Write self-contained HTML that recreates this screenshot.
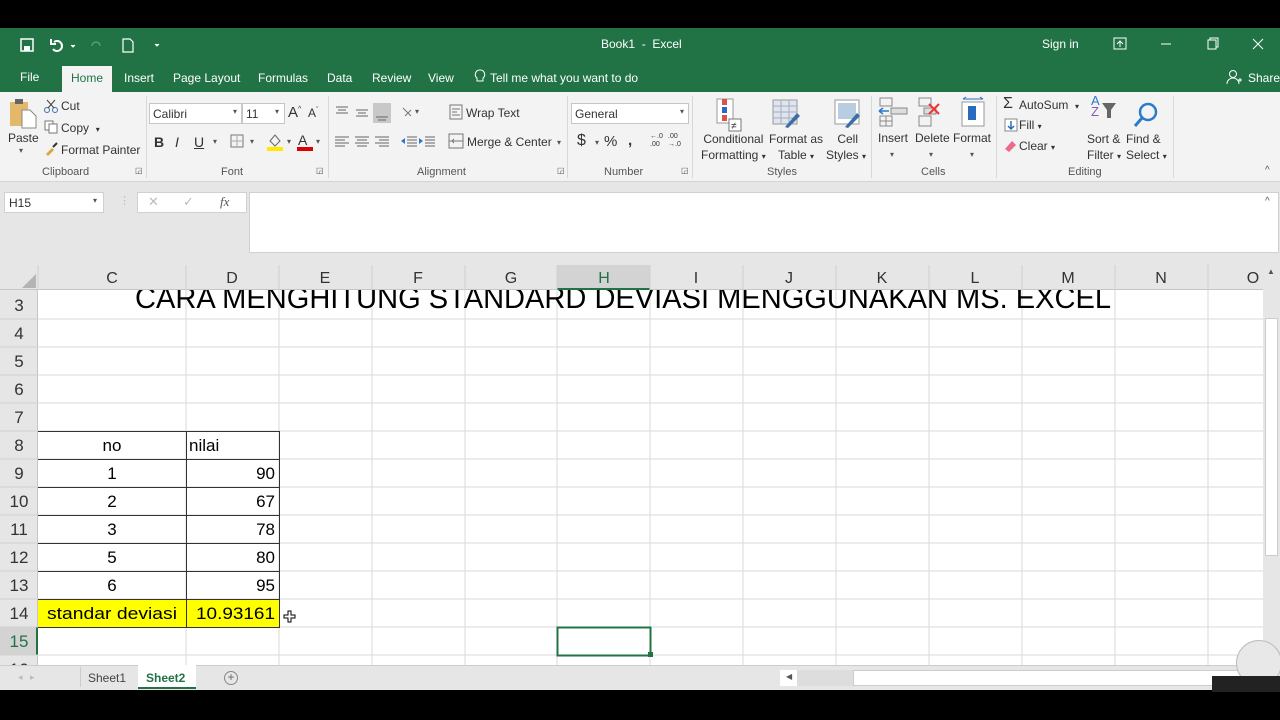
<!DOCTYPE html>
<html><head><meta charset="utf-8"><style>
*{margin:0;padding:0;box-sizing:border-box}
body{width:1280px;height:720px;overflow:hidden;background:#000;font-family:"Liberation Sans",sans-serif;position:relative}
.a{position:absolute;white-space:nowrap}
.w{color:#fff;font-size:12px}
.r{font-size:12px;color:#333}
.g{font-size:11px;color:#555}
.ic{position:absolute}
</style></head><body>
<!-- title bar -->
<div class="a" style="left:0;top:28px;width:1280px;height:64px;background:#217346"></div>
<svg class="ic" style="left:20px;top:37px" width="150" height="16" viewBox="0 0 150 16">
<rect x="1" y="2" width="12" height="12" fill="none" stroke="#fff" stroke-width="1.5"/><rect x="4" y="9" width="6" height="5" fill="#fff"/>
<path d="M34 5 a5 5 0 1 1 -1 7" fill="none" stroke="#fff" stroke-width="2"/><path d="M31 2 v5 h5" fill="none" stroke="#fff" stroke-width="2"/>
<path d="M51 8 l2 2 l2 -2" fill="#fff" stroke="#fff"/>
<path d="M72 9 a4 4 0 0 1 8 0" fill="none" stroke="#5a9a74" stroke-width="1.5"/>
<path d="M103 2 h7 l3 3 v10 h-10 z" fill="none" stroke="#fff" stroke-width="1.2"/>
<path d="M135 7 l2 2 l2 -2" fill="#fff" stroke="#fff"/>
</svg>
<div class="a w" style="left:601px;top:37px">Book1 &nbsp;-&nbsp; Excel</div>
<div class="a w" style="left:1042px;top:37px">Sign in</div>
<svg class="ic" style="left:1112px;top:37px" width="160" height="14"><rect x="2" y="1" width="12" height="11" fill="none" stroke="#fff"/><path d="M8 10V4M5 7l3-3 3 3" stroke="#fff" fill="none"/><path d="M49 7h10" stroke="#fff"/><rect x="96" y="3" width="8" height="9" fill="none" stroke="#fff"/><path d="M98 3V1h8v9h-2" stroke="#fff" fill="none"/><path d="M141 2l10 10M151 2l-10 10" stroke="#fff"/></svg>
<!-- tabs -->
<div class="a" style="left:62px;top:66px;width:50px;height:27px;background:#f3f3f3"></div>
<div class="a w" style="left:20px;top:70px">File</div>
<div class="a" style="left:71px;top:71px;font-size:12px;color:#217346">Home</div>
<div class="a w" style="left:124px;top:71px">Insert</div>
<div class="a w" style="left:173px;top:71px">Page Layout</div>
<div class="a w" style="left:258px;top:71px">Formulas</div>
<div class="a w" style="left:327px;top:71px">Data</div>
<div class="a w" style="left:372px;top:71px">Review</div>
<div class="a w" style="left:428px;top:71px">View</div>
<svg class="ic" style="left:474px;top:69px" width="12" height="16"><path d="M6 1a4.5 4.5 0 0 0-3 8v3h6v-3a4.5 4.5 0 0 0-3-8z" fill="none" stroke="#fff"/></svg>
<div class="a w" style="left:490px;top:71px">Tell me what you want to do</div>
<svg class="ic" style="left:1226px;top:69px" width="16" height="16"><circle cx="7" cy="5" r="3.5" fill="none" stroke="#fff"/><path d="M1 15a6 6 0 0 1 12 0M12 11h4M14 9v4" fill="none" stroke="#fff"/></svg>
<div class="a w" style="left:1248px;top:71px">Share</div>
<!-- ribbon -->
<div class="a" style="left:0;top:92px;width:1280px;height:90px;background:#f3f3f3;border-bottom:1px solid #d5d5d5"></div>
<div class="a" style="left:0;top:182px;width:1280px;height:83px;background:#e6e6e6"></div>
<div class="a" style="left:146px;top:96px;width:1px;height:82px;background:#d8d8d8"></div>
<div class="a" style="left:328px;top:96px;width:1px;height:82px;background:#d8d8d8"></div>
<div class="a" style="left:567px;top:96px;width:1px;height:82px;background:#d8d8d8"></div>
<div class="a" style="left:692px;top:96px;width:1px;height:82px;background:#d8d8d8"></div>
<div class="a" style="left:871px;top:96px;width:1px;height:82px;background:#d8d8d8"></div>
<div class="a" style="left:996px;top:96px;width:1px;height:82px;background:#d8d8d8"></div>
<div class="a" style="left:1173px;top:96px;width:1px;height:82px;background:#d8d8d8"></div>
<!-- clipboard -->
<svg class="ic" style="left:8px;top:98px" width="30" height="32"><rect x="2" y="4" width="18" height="24" fill="#e3b86a"/><rect x="7" y="1" width="8" height="5" fill="#666"/><path d="M14 12h8l6 6v12h-14z" fill="#fff" stroke="#888"/></svg>
<div class="a r" style="left:8px;top:131px">Paste</div>
<div class="a g" style="left:19px;top:146px;font-size:8px">▾</div>
<svg class="ic" style="left:44px;top:99px" width="14" height="14"><circle cx="3" cy="11" r="2.5" fill="none" stroke="#3a6fb0"/><circle cx="11" cy="11" r="2.5" fill="none" stroke="#3a6fb0"/><path d="M4 9L11 1M10 9L3 1" stroke="#444"/></svg>
<div class="a r" style="left:61px;top:99px">Cut</div>
<svg class="ic" style="left:44px;top:120px" width="14" height="14"><rect x="1" y="1" width="8" height="9" fill="#fff" stroke="#777"/><rect x="5" y="4" width="8" height="9" fill="#fff" stroke="#777"/></svg>
<div class="a r" style="left:61px;top:121px">Copy &nbsp;<span style="font-size:8px">▾</span></div>
<svg class="ic" style="left:44px;top:142px" width="16" height="14"><path d="M2 12l6-6 2 2-6 6z" fill="#d9a640"/><path d="M9 5l4-4" stroke="#333" stroke-width="2"/></svg>
<div class="a r" style="left:61px;top:143px">Format Painter</div>
<div class="a g" style="left:42px;top:166px">Clipboard</div>
<div class="a g" style="left:135px;top:166px;font-size:8px">◲</div>
<!-- font -->
<div class="a" style="left:149px;top:103px;width:93px;height:21px;background:#fff;border:1px solid #c6c6c6"></div>
<div class="a r" style="left:153px;top:107px">Calibri</div>
<div class="a g" style="left:233px;top:107px;font-size:8px">▾</div>
<div class="a" style="left:242px;top:103px;width:43px;height:21px;background:#fff;border:1px solid #c6c6c6"></div>
<div class="a r" style="left:246px;top:107px">11</div>
<div class="a g" style="left:275px;top:107px;font-size:8px">▾</div>
<div class="a" style="left:288px;top:104px;font-size:15px;color:#333">A<sup style="font-size:7px">^</sup></div>
<div class="a" style="left:308px;top:106px;font-size:12px;color:#333">A<sup style="font-size:7px">ˇ</sup></div>
<div class="a" style="left:154px;top:134px;font-size:14px;font-weight:bold;color:#333">B</div>
<div class="a" style="left:175px;top:134px;font-size:14px;font-style:italic;color:#333">I</div>
<div class="a" style="left:194px;top:134px;font-size:14px;text-decoration:underline;color:#333">U</div>
<div class="a g" style="left:213px;top:137px;font-size:8px">▾</div>
<svg class="ic" style="left:230px;top:134px" width="14" height="14"><rect x="1" y="1" width="12" height="12" fill="none" stroke="#777"/><path d="M7 1v12M1 7h12" stroke="#aaa"/></svg>
<div class="a g" style="left:250px;top:137px;font-size:8px">▾</div>
<svg class="ic" style="left:266px;top:132px" width="18" height="20"><path d="M4 9l5-6 5 6-5 5z" fill="none" stroke="#666"/><rect x="1" y="15" width="16" height="4" fill="#ffeb00"/></svg>
<div class="a g" style="left:287px;top:137px;font-size:8px">▾</div>
<div class="a" style="left:298px;top:132px;font-size:14px;color:#333">A</div>
<div class="a" style="left:297px;top:147px;width:16px;height:4px;background:#d00"></div>
<div class="a g" style="left:316px;top:137px;font-size:8px">▾</div>
<div class="a g" style="left:221px;top:166px">Font</div>
<div class="a g" style="left:316px;top:166px;font-size:8px">◲</div>
<!-- alignment -->
<svg class="ic" style="left:333px;top:102px" width="260" height="52">
<g stroke="#666"><path d="M3 5h12M5 8h8M3 11h12"/><path d="M23 8h12M25 11h8M23 14h12"/></g>
<rect x="40" y="1" width="18" height="20" fill="#c8c8c8"/><path d="M43 15h12M45 18h8" stroke="#666"/>
<path d="M70 6l8 8M72 14l6-6" stroke="#777"/>
<g stroke="#666"><path d="M2 35h14M2 38h10M2 41h14M2 44h10"/><path d="M22 35h14M24 38h10M22 41h14M24 44h10"/><path d="M42 35h14M46 38h10M42 41h14M46 44h10"/></g>
<g stroke="#666"><path d="M74 35h10M74 38h10M74 41h10M74 44h10"/><path d="M92 35h10M92 38h10M92 41h10M92 44h10"/></g>
<path d="M68 39l4-3v6z" fill="#2a7acd"/><path d="M90 39l-4-3v6z" fill="#2a7acd"/>
<rect x="117" y="3" width="12" height="14" fill="none" stroke="#777"/><path d="M119 7h8M119 10h5M119 13h8" stroke="#777"/>
<rect x="116" y="32" width="14" height="14" fill="none" stroke="#777"/><path d="M116 39h14M119 39l2-2M119 39l2 2" stroke="#777"/>
</svg>
<div class="a g" style="left:415px;top:107px;font-size:8px">▾</div>
<div class="a r" style="left:466px;top:106px">Wrap Text</div>
<div class="a r" style="left:467px;top:135px">Merge &amp; Center</div>
<div class="a g" style="left:557px;top:138px;font-size:8px">▾</div>
<div class="a g" style="left:417px;top:166px">Alignment</div>
<div class="a g" style="left:557px;top:166px;font-size:8px">◲</div>
<!-- number -->
<div class="a" style="left:571px;top:103px;width:118px;height:21px;background:#fff;border:1px solid #c6c6c6"></div>
<div class="a r" style="left:575px;top:107px">General</div>
<div class="a g" style="left:680px;top:107px;font-size:8px">▾</div>
<div class="a" style="left:577px;top:132px;font-size:16px;color:#333">$</div>
<div class="a g" style="left:595px;top:138px;font-size:8px">▾</div>
<div class="a" style="left:604px;top:133px;font-size:15px;color:#333">%</div>
<div class="a" style="left:628px;top:132px;font-size:15px;color:#333;font-weight:bold">,</div>
<div class="a" style="left:650px;top:133px;font-size:7px;line-height:8px;color:#333">←.0<br>.00</div>
<div class="a" style="left:668px;top:133px;font-size:7px;line-height:8px;color:#333">.00<br>→.0</div>
<div class="a g" style="left:604px;top:166px">Number</div>
<div class="a g" style="left:681px;top:166px;font-size:8px">◲</div>
<!-- styles -->
<svg class="ic" style="left:715px;top:97px" width="150" height="36">
<rect x="2" y="2" width="16" height="24" fill="#fff" stroke="#999"/><rect x="7" y="2" width="5" height="6" fill="#d9534f"/><rect x="7" y="10" width="5" height="6" fill="#2a6bbf"/><rect x="7" y="18" width="5" height="6" fill="#d9534f"/><rect x="14" y="22" width="12" height="12" fill="#fff" stroke="#777"/><text x="16" y="32" font-size="10" fill="#333">≠</text>
<rect x="58" y="3" width="24" height="24" fill="#dde6ef" stroke="#999"/><path d="M58 9h24M58 15h24M58 21h24M66 3v24M74 3v24" stroke="#aab"/><path d="M70 30l12-14 3 3-12 12z" fill="#3b6ea5"/>
<rect x="120" y="3" width="24" height="24" fill="#fff" stroke="#999"/><rect x="123" y="6" width="18" height="16" fill="#b8cde0"/><path d="M130 30l12-14 3 3-12 12z" fill="#3b6ea5"/>
</svg>
<div class="a r" style="left:701px;top:131px;text-align:center;line-height:16px">Conditional<br>Formatting <span style="font-size:8px">▾</span></div>
<div class="a r" style="left:769px;top:131px;text-align:center;line-height:16px">Format as<br>Table <span style="font-size:8px">▾</span></div>
<div class="a r" style="left:826px;top:131px;text-align:center;line-height:16px">&nbsp;Cell<br>Styles <span style="font-size:8px">▾</span></div>
<div class="a g" style="left:767px;top:166px">Styles</div>
<!-- cells -->
<svg class="ic" style="left:877px;top:96px" width="115" height="34">
<rect x="3" y="2" width="12" height="8" fill="none" stroke="#888"/><rect x="3" y="20" width="12" height="10" fill="none" stroke="#888"/><path d="M3 25h12M9 20v10" stroke="#888"/><rect x="14" y="12" width="16" height="6" fill="#ddd" stroke="#888"/><path d="M2 15h10M2 15l4-3M2 15l4 3" stroke="#2a7acd" stroke-width="1.5"/>
<rect x="42" y="2" width="12" height="8" fill="none" stroke="#888"/><rect x="42" y="20" width="12" height="10" fill="none" stroke="#888"/><rect x="47" y="12" width="12" height="6" fill="#ddd" stroke="#888"/><path d="M52 8l10 10M62 8l-10 10" stroke="#e33" stroke-width="2"/>
<rect x="85" y="6" width="22" height="24" fill="#fff" stroke="#999"/><rect x="91" y="10" width="8" height="14" fill="#2a6bbf"/><path d="M86 3h20M86 3l3-2M106 3l-3-2" stroke="#2a6bbf"/>
</svg>
<div class="a r" style="left:878px;top:131px">Insert</div>
<div class="a r" style="left:915px;top:131px">Delete</div>
<div class="a r" style="left:953px;top:131px">Format</div>
<div class="a g" style="left:890px;top:150px;font-size:8px">▾</div>
<div class="a g" style="left:929px;top:150px;font-size:8px">▾</div>
<div class="a g" style="left:970px;top:150px;font-size:8px">▾</div>
<div class="a g" style="left:921px;top:166px">Cells</div>
<!-- editing -->
<div class="a" style="left:1003px;top:95px;font-size:16px;color:#333">Σ</div>
<div class="a r" style="left:1019px;top:98px">AutoSum &nbsp;<span style="font-size:8px">▾</span></div>
<svg class="ic" style="left:1004px;top:118px" width="14" height="14"><rect x="1" y="1" width="12" height="12" fill="#fff" stroke="#888"/><path d="M7 3v8M4 8l3 3 3-3" stroke="#2a6bbf" fill="none" stroke-width="1.5"/></svg>
<div class="a r" style="left:1019px;top:118px">Fill <span style="font-size:8px">▾</span></div>
<svg class="ic" style="left:1003px;top:139px" width="14" height="14"><path d="M2 10l7-8 4 4-7 7z" fill="#ea6b8a"/></svg>
<div class="a r" style="left:1019px;top:139px">Clear <span style="font-size:8px">▾</span></div>
<div class="a" style="left:1091px;top:95px;font-size:13px;color:#2a7acd;line-height:11px">A<br><span style="color:#8a5aa8">Z</span></div>
<svg class="ic" style="left:1101px;top:101px" width="60" height="30"><path d="M1 2h14l-5 7v8h-4v-8z" fill="#666"/><circle cx="47" cy="11" r="8" fill="none" stroke="#2a7acd" stroke-width="2.5"/><path d="M41 17l-7 8" stroke="#2a7acd" stroke-width="3"/></svg>
<div class="a r" style="left:1087px;top:131px;line-height:16px">Sort &amp;<br>Filter <span style="font-size:8px">▾</span></div>
<div class="a r" style="left:1126px;top:131px;line-height:16px">Find &amp;<br>Select <span style="font-size:8px">▾</span></div>
<div class="a g" style="left:1068px;top:166px">Editing</div>
<div class="a g" style="left:1265px;top:165px;font-size:10px">^</div>
<!-- formula bar -->
<div class="a" style="left:4px;top:192px;width:100px;height:21px;background:#fff;border:1px solid #d0d0d0"></div>
<div class="a r" style="left:9px;top:196px">H15</div>
<div class="a g" style="left:93px;top:196px;font-size:8px">▾</div>
<div class="a g" style="left:119px;top:194px;color:#bbb">⋮</div>
<div class="a" style="left:137px;top:192px;width:110px;height:21px;background:#fff;border:1px solid #d0d0d0"></div>
<div class="a" style="left:148px;top:194px;font-size:13px;color:#bbb">✕</div>
<div class="a" style="left:183px;top:194px;font-size:13px;color:#bbb">✓</div>
<div class="a" style="left:220px;top:194px;font-size:13px;color:#555;font-style:italic;font-family:'Liberation Serif',serif">fx</div>
<div class="a" style="left:249px;top:192px;width:1030px;height:61px;background:#fff;border:1px solid #d0d0d0"></div>
<div class="a g" style="left:1265px;top:196px;font-size:10px">^</div>
<!-- sheet -->
<div class="a" style="left:38px;top:290px;width:1225px;height:375px;background:#fff;overflow:hidden">
<svg width="1225" height="375" style="position:absolute;left:0;top:0">
<g stroke="#dadada" stroke-width="1">
<path d="M148 0v375M241 0v375M334 0v375M427 0v375M519 0v375M612 0v375M705 0v375M798 0v375M891 0v375M984 0v375M1077 0v375M1170 0v375"/>
<path d="M0 29h1225M0 57h1225M0 85h1225M0 113h1225M0 141h1225M0 169h1225M0 197h1225M0 225h1225M0 253h1225M0 281h1225M0 309h1225M0 337h1225M0 365h1225"/>
</g>
<rect x="0" y="309" width="241" height="28" fill="#ffff00"/>
<g stroke="#333" stroke-width="1" fill="none">
<path d="M0 141.5h241.5v196H0M148.5 141v196M0 169.5h241M0 197.5h241M0 225.5h241M0 253.5h241M0 281.5h241M0 309.5h241"/>
</g>
<rect x="519.5" y="337.5" width="93" height="28" fill="none" stroke="#217346" stroke-width="2"/>
<rect x="610" y="362" width="5" height="5" fill="#217346"/>
<text x="585" y="18" text-anchor="middle" font-family="Liberation Sans" font-size="30" textLength="976" lengthAdjust="spacingAndGlyphs">CARA MENGHITUNG STANDARD DEVIASI MENGGUNAKAN MS. EXCEL</text>
<g font-family="Liberation Sans" font-size="17" fill="#000">
<text x="74" y="161" text-anchor="middle">no</text>
<text x="151" y="161">nilai</text>
<text x="74" y="189" text-anchor="middle">1</text><text x="237" y="189" text-anchor="end">90</text>
<text x="74" y="217" text-anchor="middle">2</text><text x="237" y="217" text-anchor="end">67</text>
<text x="74" y="245" text-anchor="middle">3</text><text x="237" y="245" text-anchor="end">78</text>
<text x="74" y="273" text-anchor="middle">5</text><text x="237" y="273" text-anchor="end">80</text>
<text x="74" y="301" text-anchor="middle">6</text><text x="237" y="301" text-anchor="end">95</text>
<text x="74" y="329" text-anchor="middle" textLength="130" lengthAdjust="spacingAndGlyphs">standar deviasi</text>
<text x="237" y="329" text-anchor="end" textLength="79" lengthAdjust="spacingAndGlyphs">10.93161</text>
</g>
<path d="M246 325h4v-4h3v4h4v3h-4v4h-3v-4h-4z" fill="#fff" stroke="#000"/>
</svg>
</div>
<!-- column headers -->
<div class="a" style="left:0;top:265px;width:1263px;height:25px;background:#e6e6e6;border-bottom:1px solid #c6c6c6"></div>
<div class="a" style="left:557px;top:265px;width:93px;height:25px;background:#d3d3d3;border-bottom:2px solid #217346"></div>
<svg class="ic" style="left:0;top:265px" width="1263" height="25">
<path d="M36 9v14h-14z" fill="#b4b4b4"/>
<g stroke="#d0d0d0"><path d="M38 0v25M186 0v25M279 0v25M372 0v25M465 0v25M557 0v25M650 0v25M743 0v25M836 0v25M929 0v25M1022 0v25M1115 0v25M1208 0v25"/></g>
<g font-family="Liberation Sans" font-size="16" fill="#333" text-anchor="middle">
<text x="112" y="18">C</text><text x="232" y="18">D</text><text x="325" y="18">E</text><text x="418" y="18">F</text><text x="511" y="18">G</text><text x="604" y="18" fill="#217346">H</text><text x="696" y="18">I</text><text x="789" y="18">J</text><text x="882" y="18">K</text><text x="975" y="18">L</text><text x="1068" y="18">M</text><text x="1161" y="18">N</text><text x="1253" y="18">O</text>
</g></svg>
<!-- row headers -->
<div class="a" style="left:0;top:290px;width:38px;height:375px;background:#e6e6e6;border-right:1px solid #c6c6c6;overflow:hidden"></div>
<div class="a" style="left:0;top:627px;width:38px;height:28px;background:#d3d3d3;border-right:2px solid #217346"></div>
<svg class="ic" style="left:0;top:290px" width="38" height="375">
<g stroke="#d0d0d0"><path d="M0 29h38M0 57h38M0 85h38M0 113h38M0 141h38M0 169h38M0 197h38M0 225h38M0 253h38M0 281h38M0 309h38M0 337h38M0 365h38"/></g>
<g font-family="Liberation Sans" font-size="17" fill="#333" text-anchor="middle">
<text x="19" y="21">3</text><text x="19" y="49">4</text><text x="19" y="77">5</text><text x="19" y="105">6</text><text x="19" y="133">7</text><text x="19" y="161">8</text><text x="19" y="189">9</text><text x="19" y="217">10</text><text x="19" y="245">11</text><text x="19" y="273">12</text><text x="19" y="301">13</text><text x="19" y="329">14</text><text x="19" y="357" fill="#217346">15</text><text x="19" y="385">16</text>
</g></svg>
<!-- vertical scrollbar -->
<div class="a" style="left:1263px;top:265px;width:17px;height:400px;background:#e6e6e6"></div>
<div class="a" style="left:1265px;top:318px;width:13px;height:238px;background:#fff;border:1px solid #ccc"></div>
<div class="a g" style="left:1267px;top:267px;font-size:8px">▲</div>
<!-- sheet tab bar -->
<div class="a" style="left:0;top:665px;width:1280px;height:25px;background:#e6e6e6;border-top:1px solid #ccc"></div>
<div class="a" style="left:18px;top:672px;font-size:9px;color:#bbb">◂ &nbsp; ▸</div>
<div class="a" style="left:80px;top:667px;width:1px;height:20px;background:#ccc"></div>
<div class="a" style="left:88px;top:671px;font-size:12px;color:#444">Sheet1</div>
<div class="a" style="left:138px;top:665px;width:58px;height:24px;background:#fff;border-bottom:2px solid #217346"></div>
<div class="a" style="left:146px;top:671px;font-size:12px;color:#217346;font-weight:bold">Sheet2</div>
<div class="a" style="left:224px;top:671px;width:14px;height:14px;border:1px solid #888;border-radius:50%;font-size:12px;line-height:11px;text-align:center;color:#666">+</div>
<div class="a" style="left:780px;top:670px;width:17px;height:16px;background:#fff"></div>
<div class="a g" style="left:786px;top:672px;font-size:8px">◀</div>
<div class="a" style="left:797px;top:670px;width:56px;height:16px;background:#ddd"></div>
<div class="a" style="left:853px;top:670px;width:390px;height:16px;background:#fff;border:1px solid #ccc"></div>
<div class="a" style="left:1236px;top:640px;width:46px;height:46px;border-radius:50%;background:#e8e8e8;border:1px solid #bbb"></div>
<div class="a" style="left:1212px;top:676px;width:68px;height:16px;background:#222"></div>
</body></html>
